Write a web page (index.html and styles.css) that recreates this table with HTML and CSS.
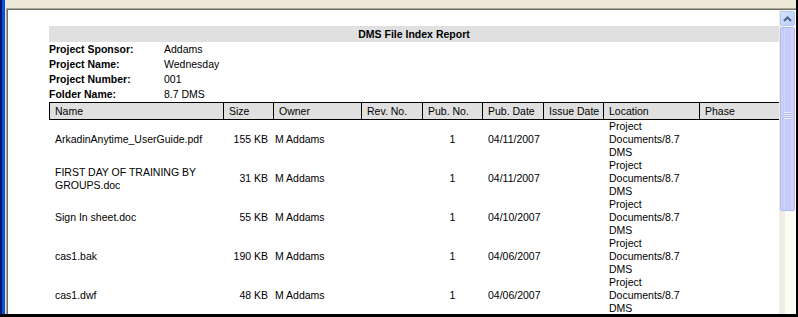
FILE: index.html
```html
<!DOCTYPE html>
<html>
<head>
  <title>DMS File Index Report</title>
  <link rel="stylesheet" href="styles.css">
</head>
<body>
  <div class="window">
    <div class="frame-edge"></div>
    <div class="client">
      <div class="view">
        <div class="view-inner">
          <div class="page">
            <div class="report">
              <div class="report-title">DMS File Index Report</div>
              <table class="info">
                <tr><th>Project Sponsor:</th><td>Addams</td></tr>
                <tr><th>Project Name:</th><td>Wednesday</td></tr>
                <tr><th>Project Number:</th><td>001</td></tr>
                <tr><th>Folder Name:</th><td>8.7 DMS</td></tr>
              </table>
              <table class="files">
                <colgroup>
                  <col style="width: 174px">
                  <col style="width: 50px">
                  <col style="width: 88px">
                  <col style="width: 61px">
                  <col style="width: 60px">
                  <col style="width: 61px">
                  <col style="width: 60px">
                  <col style="width: 96px">
                  <col style="width: 80px">
                </colgroup>
                <thead>
                  <tr>
                    <th>Name</th>
                    <th>Size</th>
                    <th>Owner</th>
                    <th>Rev. No.</th>
                    <th>Pub. No.</th>
                    <th>Pub. Date</th>
                    <th>Issue Date</th>
                    <th>Location</th>
                    <th>Phase</th>
                  </tr>
                </thead>
                <tbody>
                  <tr>
                    <td>ArkadinAnytime_UserGuide.pdf</td>
                    <td class="size">155 KB</td>
                    <td class="owner">M Addams</td>
                    <td></td>
                    <td class="pub-no">1</td>
                    <td>04/11/2007</td>
                    <td></td>
                    <td>Project Documents/8.7 DMS</td>
                    <td></td>
                  </tr>
                  <tr>
                    <td>FIRST DAY OF TRAINING BY GROUPS.doc</td>
                    <td class="size">31 KB</td>
                    <td class="owner">M Addams</td>
                    <td></td>
                    <td class="pub-no">1</td>
                    <td>04/11/2007</td>
                    <td></td>
                    <td>Project Documents/8.7 DMS</td>
                    <td></td>
                  </tr>
                  <tr>
                    <td>Sign In sheet.doc</td>
                    <td class="size">55 KB</td>
                    <td class="owner">M Addams</td>
                    <td></td>
                    <td class="pub-no">1</td>
                    <td>04/10/2007</td>
                    <td></td>
                    <td>Project Documents/8.7 DMS</td>
                    <td></td>
                  </tr>
                  <tr>
                    <td>cas1.bak</td>
                    <td class="size">190 KB</td>
                    <td class="owner">M Addams</td>
                    <td></td>
                    <td class="pub-no">1</td>
                    <td>04/06/2007</td>
                    <td></td>
                    <td>Project Documents/8.7 DMS</td>
                    <td></td>
                  </tr>
                  <tr>
                    <td>cas1.dwf</td>
                    <td class="size">48 KB</td>
                    <td class="owner">M Addams</td>
                    <td></td>
                    <td class="pub-no">1</td>
                    <td>04/06/2007</td>
                    <td></td>
                    <td>Project Documents/8.7 DMS</td>
                    <td></td>
                  </tr>
                </tbody>
              </table>
            </div>
          </div>
          <div class="scrollbar">
            <div class="scroll-btn">
              <svg width="9" height="6" viewBox="0 0 9 6">
                <path d="M1 5 L4.5 1.5 L8 5" fill="none" stroke="#4d6185" stroke-width="2"/>
              </svg>
            </div>
            <div class="scroll-thumb">
              <span class="grip"></span>
            </div>
          </div>
        </div>
      </div>
    </div>
  </div>
</body>
</html>
```

FILE: styles.css
```css
body {
  margin: 0;
  font-family: "Liberation Sans", Arial, sans-serif;
  font-size: 10.5px;
  color: #000;
}

.window {
  width: 798px;
  height: 317px;
  display: flex;
  background-color: #000;
  overflow: hidden;
}

.frame-edge {
  width: 5px;
  height: 314px;
  background: linear-gradient(to right, #00156e 0 2px, #0b4fdc 2px);
}

.client {
  width: 791px;
  height: 314px;
  box-sizing: border-box;
  padding: 8px 0 0 1px;
  background-color: #ece9d8;
  display: flex;
}

.view {
  flex: 1;
  display: flex;
  border-top: 1px solid #aca899;
  border-left: 1px solid #aca899;
}

.view-inner {
  flex: 1;
  display: flex;
  border-top: 1px solid #716f64;
  border-left: 1px solid #716f64;
}

.page {
  width: 771px;
  background-color: #fff;
  overflow: hidden;
}

.report {
  margin: 16px 0 0 41px;
  width: 730px;
}

.report-title {
  height: 16px;
  line-height: 16px;
  background-color: #e0e0e0;
  text-align: center;
  font-weight: bold;
}

/* project details */
.info {
  border-spacing: 0;
}

.info th,
.info td {
  padding: 0;
  height: 15px;
  line-height: 15px;
  text-align: left;
  white-space: nowrap;
}

.info th {
  width: 115px;
  font-weight: bold;
}

/* file list */
.files {
  width: 730px;
  table-layout: fixed;
  border-spacing: 0;
}

.files th {
  padding: 0 5px;
  line-height: 16px;
  font-weight: normal;
  text-align: left;
  background-color: #e0e0e0;
  border-top: 1px solid #000;
  border-bottom: 1px solid #000;
  border-left: 1px solid #000;
  white-space: nowrap;
  overflow: hidden;
}

.files td {
  height: 39px;
  padding: 0 5px 0 6px;
  line-height: 13px;
  vertical-align: middle;
}

.files td.size {
  text-align: right;
  padding-right: 5px;
}

.files td.owner {
  padding-left: 2px;
}

.files td.pub-no {
  text-align: center;
}

/* vertical scroll bar */
.scrollbar {
  width: 17px;
  background: linear-gradient(to right, #eeede5 0 6px, #fdfcf4 6px 16px, #fff 16px);
}

.scroll-btn {
  width: 13px;
  height: 13px;
  margin: 1px 0 0 1px;
  border: 1px solid #b3c7f4;
  border-radius: 2px;
  background: linear-gradient(to bottom right, #d6e5fe, #b8cffc);
  display: flex;
  align-items: center;
  justify-content: center;
}

.scroll-thumb {
  width: 13px;
  height: 182px;
  margin: 1px 0 0 1px;
  border: 1px solid #a9bbea;
  border-radius: 2px;
  background: linear-gradient(to right, #c6d8fc 0 1px, #c9c9fb 1px 3px, #b9e3fd 3px 4px, #c9c9fb 4px 10px, #d1d1fb 10px);
  position: relative;
}

.grip {
  position: absolute;
  left: 3px;
  top: 84px;
  width: 7px;
  height: 7px;
  background: repeating-linear-gradient(to bottom, #eef4fe 0 1px, #a9b8e6 1px 2px);
}
```
